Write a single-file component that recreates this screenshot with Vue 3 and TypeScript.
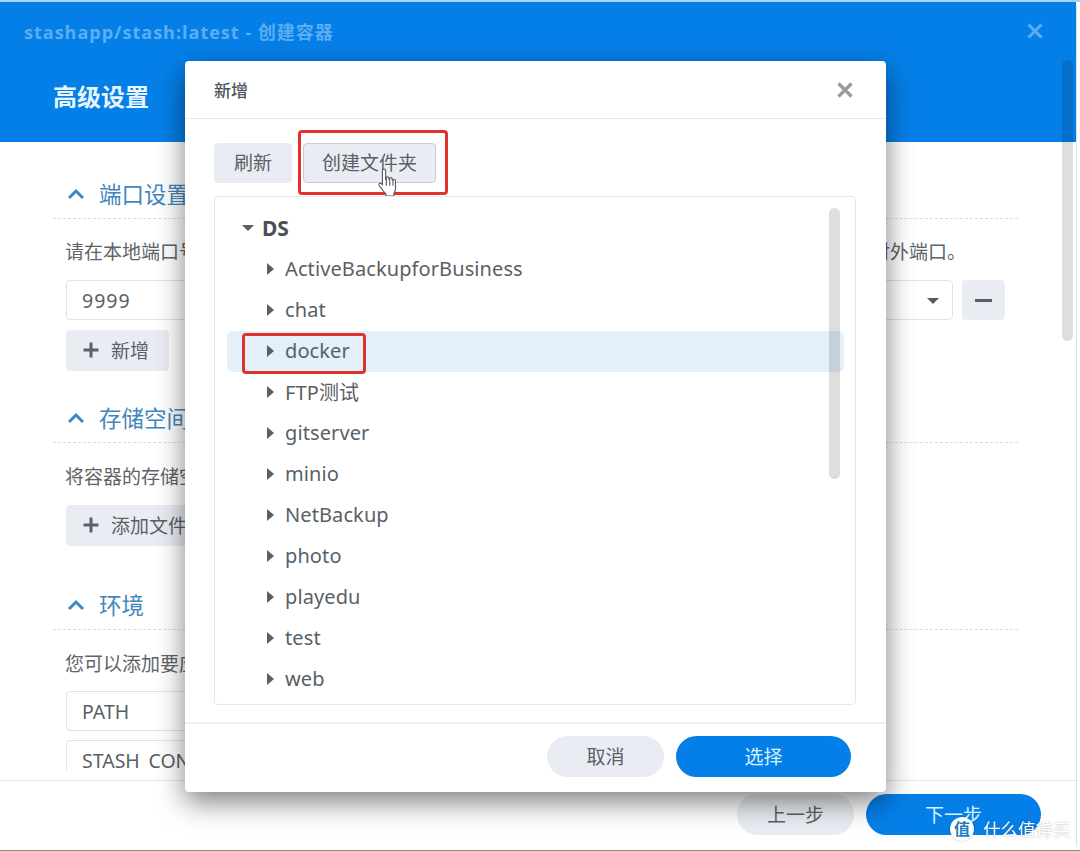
<script setup lang="ts">
const folders = [
  'ActiveBackupforBusiness',
  'chat',
  'docker',
  'FTP测试',
  'gitserver',
  'minio',
  'NetBackup',
  'photo',
  'playedu',
  'test',
  'web',
]
</script>

<template>
  <div class="page">
    <div class="window">
      <header class="win-head">
        <div class="win-title-row">
          <span class="win-title">stashapp/stash:latest - 创建容器</span>
          <svg class="win-close" width="18" height="18" viewBox="0 0 18 18"><path d="M2.5 2.5l13 13M15.500 2.500l-13 13" /></svg>
        </div>
        <h1 class="win-heading">高级设置</h1>
      </header>

      <main class="win-body">
        <div class="win-scroll">
          <section class="sec">
            <div class="sec-head">
              <svg class="chev" width="18" height="12" viewBox="0 0 18 12"><path d="M2 10l7-7 7 7" /></svg>
              <span>端口设置</span>
            </div>
            <p class="desc split"><span>请在本地端口号中输入容器端口</span><span>对外端口。</span></p>
            <div class="port-row">
              <div class="field num">9999</div>
              <div class="field select"><i class="caret"></i></div>
              <button class="square"><b class="minus"></b></button>
            </div>
            <button class="add">
              <svg width="18" height="18" viewBox="0 0 18 18"><path d="M9 1.500v15M1.500 9h15" /></svg>
              <span>新增</span>
            </button>
          </section>

          <section class="sec">
            <div class="sec-head">
              <svg class="chev" width="18" height="12" viewBox="0 0 18 12"><path d="M2 10l7-7 7 7" /></svg>
              <span>存储空间设置</span>
            </div>
            <p class="desc">将容器的存储空间映射到本地文件夹</p>
            <button class="add">
              <svg width="18" height="18" viewBox="0 0 18 18"><path d="M9 1.500v15M1.500 9h15" /></svg>
              <span>添加文件夹</span>
            </button>
          </section>

          <section class="sec">
            <div class="sec-head">
              <svg class="chev" width="18" height="12" viewBox="0 0 18 12"><path d="M2 10l7-7 7 7" /></svg>
              <span>环境</span>
            </div>
            <p class="desc">您可以添加要应用的环境变量</p>
            <div class="field env">PATH</div>
            <div class="field env">STASH_CONFIG_FILE</div>
          </section>
        </div>
      </main>

      <footer class="win-foot">
        <button class="pill ghost">上一步</button>
        <button class="pill primary wide">下一步</button>
      </footer>

      <div class="dialog">
        <div class="dlg-head">
          <span>新增</span>
          <svg width="18" height="18" viewBox="0 0 18 18"><path d="M2.500 2.500l13 13M15.500 2.500l-13 13" /></svg>
        </div>
        <div class="dlg-body">
          <div class="tools">
            <button class="tool">刷新</button>
            <button class="tool hover">创建文件夹</button>
            <i class="mark mark-create"></i>
            <svg class="hand" width="25" height="32" viewBox="0 0 22 29">
              <path d="M7 2.200c1-.6 2.300 0 2.300 1.300v8l.7-.2V9.800c0-1.300 2.200-1.300 2.300 0v1.600l.7.100v-1c0-1.200 2.200-1.200 2.300.1v1.300l.6.200c.2-1.100 2.300-1 2.400.4v6.500c0 2.500-.8 3.600-1.500 5v2.400H9.500v-2c-1.800-2-3.500-4.500-6-7.600-1-1.400.6-2.800 1.900-1.700l1 1V3.500c0-.6.200-1 .6-1.300z" />
              <path d="M10 12v5M13 12v5M16 12v5" />
            </svg>
          </div>
          <div class="tree">
            <div class="root"><i class="tri-down"></i><span>DS</span></div>
            <div v-for="name in folders" :key="name" class="row" :class="{ sel: name === 'docker' }">
              <i class="tri-right"></i><span>{{ name }}</span>
              <i v-if="name === 'docker'" class="mark mark-docker"></i>
            </div>
            <div class="tree-scroll"></div>
          </div>
        </div>
        <div class="dlg-foot">
          <button class="pill ghost">取消</button>
          <button class="pill primary wide">选择</button>
        </div>
      </div>

      <div class="scrollbar"></div>
    </div>

    <div class="watermark">
      <span class="wm-logo">值</span>
      <span class="wm-text">什么值得买</span>
    </div>
  </div>
</template>

<style>
html, body { margin: 0; background: #fff; }
</style>

<style scoped>
.page {
  position: relative;
  width: 1080px;
  height: 851px;
  overflow: hidden;
  background: #fff;
  border-top: 2px solid #a9d3f5;
  border-bottom: 1px solid #8d8d8d;
  box-sizing: border-box;
  font-family: "Noto Sans", "Noto Sans CJK SC", sans-serif;
  color: #5a5f66;
}
.window {
  position: relative;
  width: 1077px;
  height: 848px;
  display: flex;
  flex-direction: column;
  background: #fff;
  border-radius: 0 6px 6px 0;
  border-right: 1px solid #dfe2e5;
  box-sizing: border-box;
}
button { font-family: inherit; border: 0; color: inherit; padding: 0; }

.win-head { height: 140px; flex: none; background: #057fe8; color: #fff; }
.win-title-row { display: flex; justify-content: space-between; align-items: center; padding: 18px 32px 0 24px; height: 22px; }
.win-title { font-family: "Open Sans", "Noto Sans CJK SC", sans-serif; font-size: 18px; letter-spacing: 1px; font-weight: 700; color: #5caef0; white-space: nowrap; }
.win-close { fill: none; stroke: #5caef0; stroke-width: 3; }
.win-heading { margin: 38px 0 0 53px; font-size: 24px; line-height: 34px; font-weight: 700; color: #e8f5fd; }

.win-body { flex: 1; min-height: 0; }
.win-scroll { height: 628px; overflow: hidden; padding: 37px 58px 0 53px; box-sizing: border-box; }
.sec { height: 224px; }
.sec:nth-child(2) { height: 187px; }
.sec-head { display: flex; align-items: center; gap: 14px; height: 29px; padding: 0 0 10px 14px; border-bottom: 1px dashed #d9dde1; font-size: 22.500px; color: #3f87bd; }
.chev { fill: none; stroke: #3f87bd; stroke-width: 3; }
.desc { margin: 21px 0 0 12px; font-size: 19px; line-height: 24px; color: #5f6368; }
.sec:not(:first-child) .desc { margin-top: 22px; }
.split { display: flex; justify-content: space-between; padding-right: 52px; }

.port-row { display: flex; gap: 9px; margin: 16px 13px 0 13px; }
.field { flex: 1; height: 40px; border: 1px solid #dde3e8; border-radius: 4px; padding-left: 15px; font-size: 19.500px; line-height: 39px; color: #5a5f66; box-sizing: border-box; background: #fff; overflow: hidden; white-space: nowrap; }
.num { letter-spacing: 1px; }
.select { position: relative; }
.caret { position: absolute; right: 13px; top: 17px; border: 6px solid transparent; border-top: 6px solid #555a60; border-bottom: 0; }
.square { width: 43px; height: 40px; background: #e9edf3; border-radius: 4px; display: flex; align-items: center; justify-content: center; }
.minus { width: 17px; height: 3px; background: #5a5f66; }
.add { display: flex; align-items: center; gap: 11px; height: 41px; margin: 10px 0 0 13px; padding: 0 20px 2px 16px; background: #e9edf3; border-radius: 4px; font-size: 19px; color: #5a5f66; box-sizing: border-box; }
.sec:nth-child(2) .add { margin-top: 16px; }
.add svg { fill: none; stroke: #5a5f66; stroke-width: 3; }
.env { width: 400px; flex: none; margin: 9px 0 0 13px; line-height: 40px; }
.desc + .env { margin-top: 15px; }

.win-foot { flex: none; height: 70px; border-top: 1px solid #e6e9ec; display: flex; justify-content: flex-end; gap: 12px; padding: 13px 35px 0 0; box-sizing: border-box; background: #fff; }
.pill { width: 117px; height: 41px; border-radius: 21px; font-size: 19px; padding-bottom: 2px; }
.ghost { background: #e9edf3; color: #5a5f66; }
.primary { background: #057fe8; color: #d7f3fb; }
.wide { width: 175px; }

.scrollbar { position: absolute; right: 3px; top: 58px; width: 11px; height: 281px; border-radius: 6px; background: rgba(0, 0, 0, 0.13); }

.dialog {
  position: absolute;
  left: 185px;
  top: 59px;
  width: 701px;
  height: 731px;
  display: flex;
  flex-direction: column;
  background: #fff;
  border-radius: 4px;
  box-shadow: 0 10px 28px rgba(0, 0, 0, 0.5);
}
.dlg-head { flex: none; height: 58px; display: flex; justify-content: space-between; align-items: center; padding: 0 32px 0 29px; border-bottom: 1px solid #e8ebee; box-sizing: border-box; font-size: 17px; font-weight: 500; color: #50555b; }
.dlg-head svg { fill: none; stroke: #9a9a9a; stroke-width: 3.2; }
.dlg-body { flex: 1; min-height: 0; padding: 24px 30px 0 29px; }
.tools { position: relative; display: flex; gap: 11px; height: 40px; }
.tool { width: 78px; height: 40px; border-radius: 4px; background: #e9edf3; font-size: 19px; color: #5a5f66; padding-bottom: 3px; }
.tool.hover { width: 133px; border: 1px solid #c9cdd2; box-sizing: border-box; }
.mark { position: absolute; border: 3px solid #e0322c; border-radius: 4px; box-sizing: border-box; }
.mark-create { left: 84px; top: -13px; width: 150px; height: 65px; }
.hand { position: absolute; left: 161px; top: 24px; fill: #fff; stroke: #55595e; stroke-width: 1; }
.tree { position: relative; height: 509px; margin-top: 13px; border: 1px solid #e6e9ec; border-radius: 4px; overflow: hidden; padding: 11px 0 0 12px; box-sizing: border-box; }
.root { display: flex; align-items: center; height: 41px; padding: 0 0 2px 15px; font-size: 21px; font-weight: 700; color: #4a4f55; box-sizing: border-box; }
.root .tri-down { margin-right: 8px; }
.tri-down { width: 0; height: 0; border: 6px solid transparent; border-top: 6px solid #5a5f66; border-bottom: 0; }
.tri-right { width: 0; height: 0; border: 6px solid transparent; border-left: 7px solid #5a5f66; border-right: 0; margin-right: 11px; }
.row { position: relative; display: flex; align-items: center; height: 41px; width: 617px; padding: 0 0 2px 40px; border-radius: 6px; font-size: 20px; letter-spacing: 0.1px; color: #5a5f66; box-sizing: border-box; }
.row.sel { background: #e3eff9; }
.mark-docker { left: 15px; top: 2px; width: 124px; height: 41px; }
.tree-scroll { position: absolute; left: 614px; top: 11px; width: 11px; height: 271px; border-radius: 6px; background: rgba(0, 0, 0, 0.13); }
.dlg-foot { flex: none; height: 70px; border-top: 2px solid #eef1f3; display: flex; justify-content: flex-end; gap: 12px; padding: 12px 35px 0 0; box-sizing: border-box; }

.watermark { position: absolute; left: 950px; top: 815px; display: flex; align-items: center; gap: 9px; color: #fff; }
.wm-logo { width: 24px; height: 24px; border-radius: 50%; background: #fff; color: #1d7cc4; font-size: 16px; line-height: 24px; text-align: center; font-weight: 700; box-shadow: 0 0 2px rgba(0, 0, 0, 0.3); }
.wm-text { font-size: 17.500px; line-height: 24px; white-space: nowrap; text-shadow: 0 0 2px rgba(0, 0, 0, 0.3); }
</style>
